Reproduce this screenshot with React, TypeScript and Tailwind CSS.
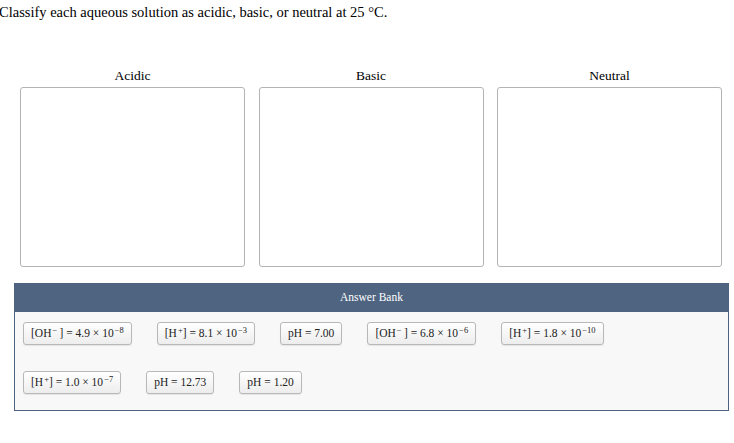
import React from "react";

const Sup = ({ children }: { children: React.ReactNode }) => (
  <span className="text-[8.5px] relative top-[-4px] leading-none ml-[1px]">{children}</span>
);

const Chip = ({ children }: { children: React.ReactNode }) => (
  <div className="h-[23px] flex items-center px-[7px] border border-[#b8b8b8] rounded-[3px] bg-gradient-to-b from-[#ffffff] to-[#ededed] shadow-[0_1px_1px_rgba(0,0,0,0.08)] text-[11.5px] text-[#222] whitespace-nowrap">
    <span>{children}</span>
  </div>
);

export default function App() {
  const cols = ["Acidic", "Basic", "Neutral"];
  return (
    <div className="w-[734px] h-[443px] bg-white text-black" style={{ fontFamily: '"Liberation Serif", "Times New Roman", serif' }}>
      <p className="pt-[4px] text-[14.5px] leading-[16px] -ml-[1px]">
        Classify each aqueous solution as acidic, basic, or neutral at 25 °C.
      </p>
      <div className="flex ml-[20px] gap-[13.5px] mt-[48px]">
        {cols.map((c) => (
          <div key={c} className="w-[225px] flex flex-col">
            <div className="text-center text-[13.5px] leading-[16px] mb-[3px]">{c}</div>
            <div className="h-[180px] border border-[#b3b3b3] rounded-[3px] bg-white" />
          </div>
        ))}
      </div>
      <div className="ml-[14px] w-[715px] mt-[16px] border border-[#4d6380]">
        <div className="h-[28px] bg-[#4e6480] flex items-center justify-center text-white text-[11.5px]">
          Answer Bank
        </div>
        <div className="bg-[#f8f8f8] h-[98px] pt-[10px] pl-[8px] flex flex-col gap-[26px]">
          <div className="flex gap-[25px]">
            <Chip>
              [OH<Sup>−</Sup>&thinsp;] = 4.9 × 10<Sup>−8</Sup>
            </Chip>
            <Chip>
              [H<Sup>+</Sup>] = 8.1 × 10<Sup>−3</Sup>
            </Chip>
            <Chip>pH = 7.00</Chip>
            <Chip>
              [OH<Sup>−</Sup>&thinsp;] = 6.8 × 10<Sup>−6</Sup>
            </Chip>
            <Chip>
              [H<Sup>+</Sup>] = 1.8 × 10<Sup>−10</Sup>
            </Chip>
          </div>
          <div className="flex gap-[25px]">
            <Chip>
              [H<Sup>+</Sup>] = 1.0 × 10<Sup>−7</Sup>
            </Chip>
            <Chip>pH = 12.73</Chip>
            <Chip>pH = 1.20</Chip>
          </div>
        </div>
      </div>
    </div>
  );
}
